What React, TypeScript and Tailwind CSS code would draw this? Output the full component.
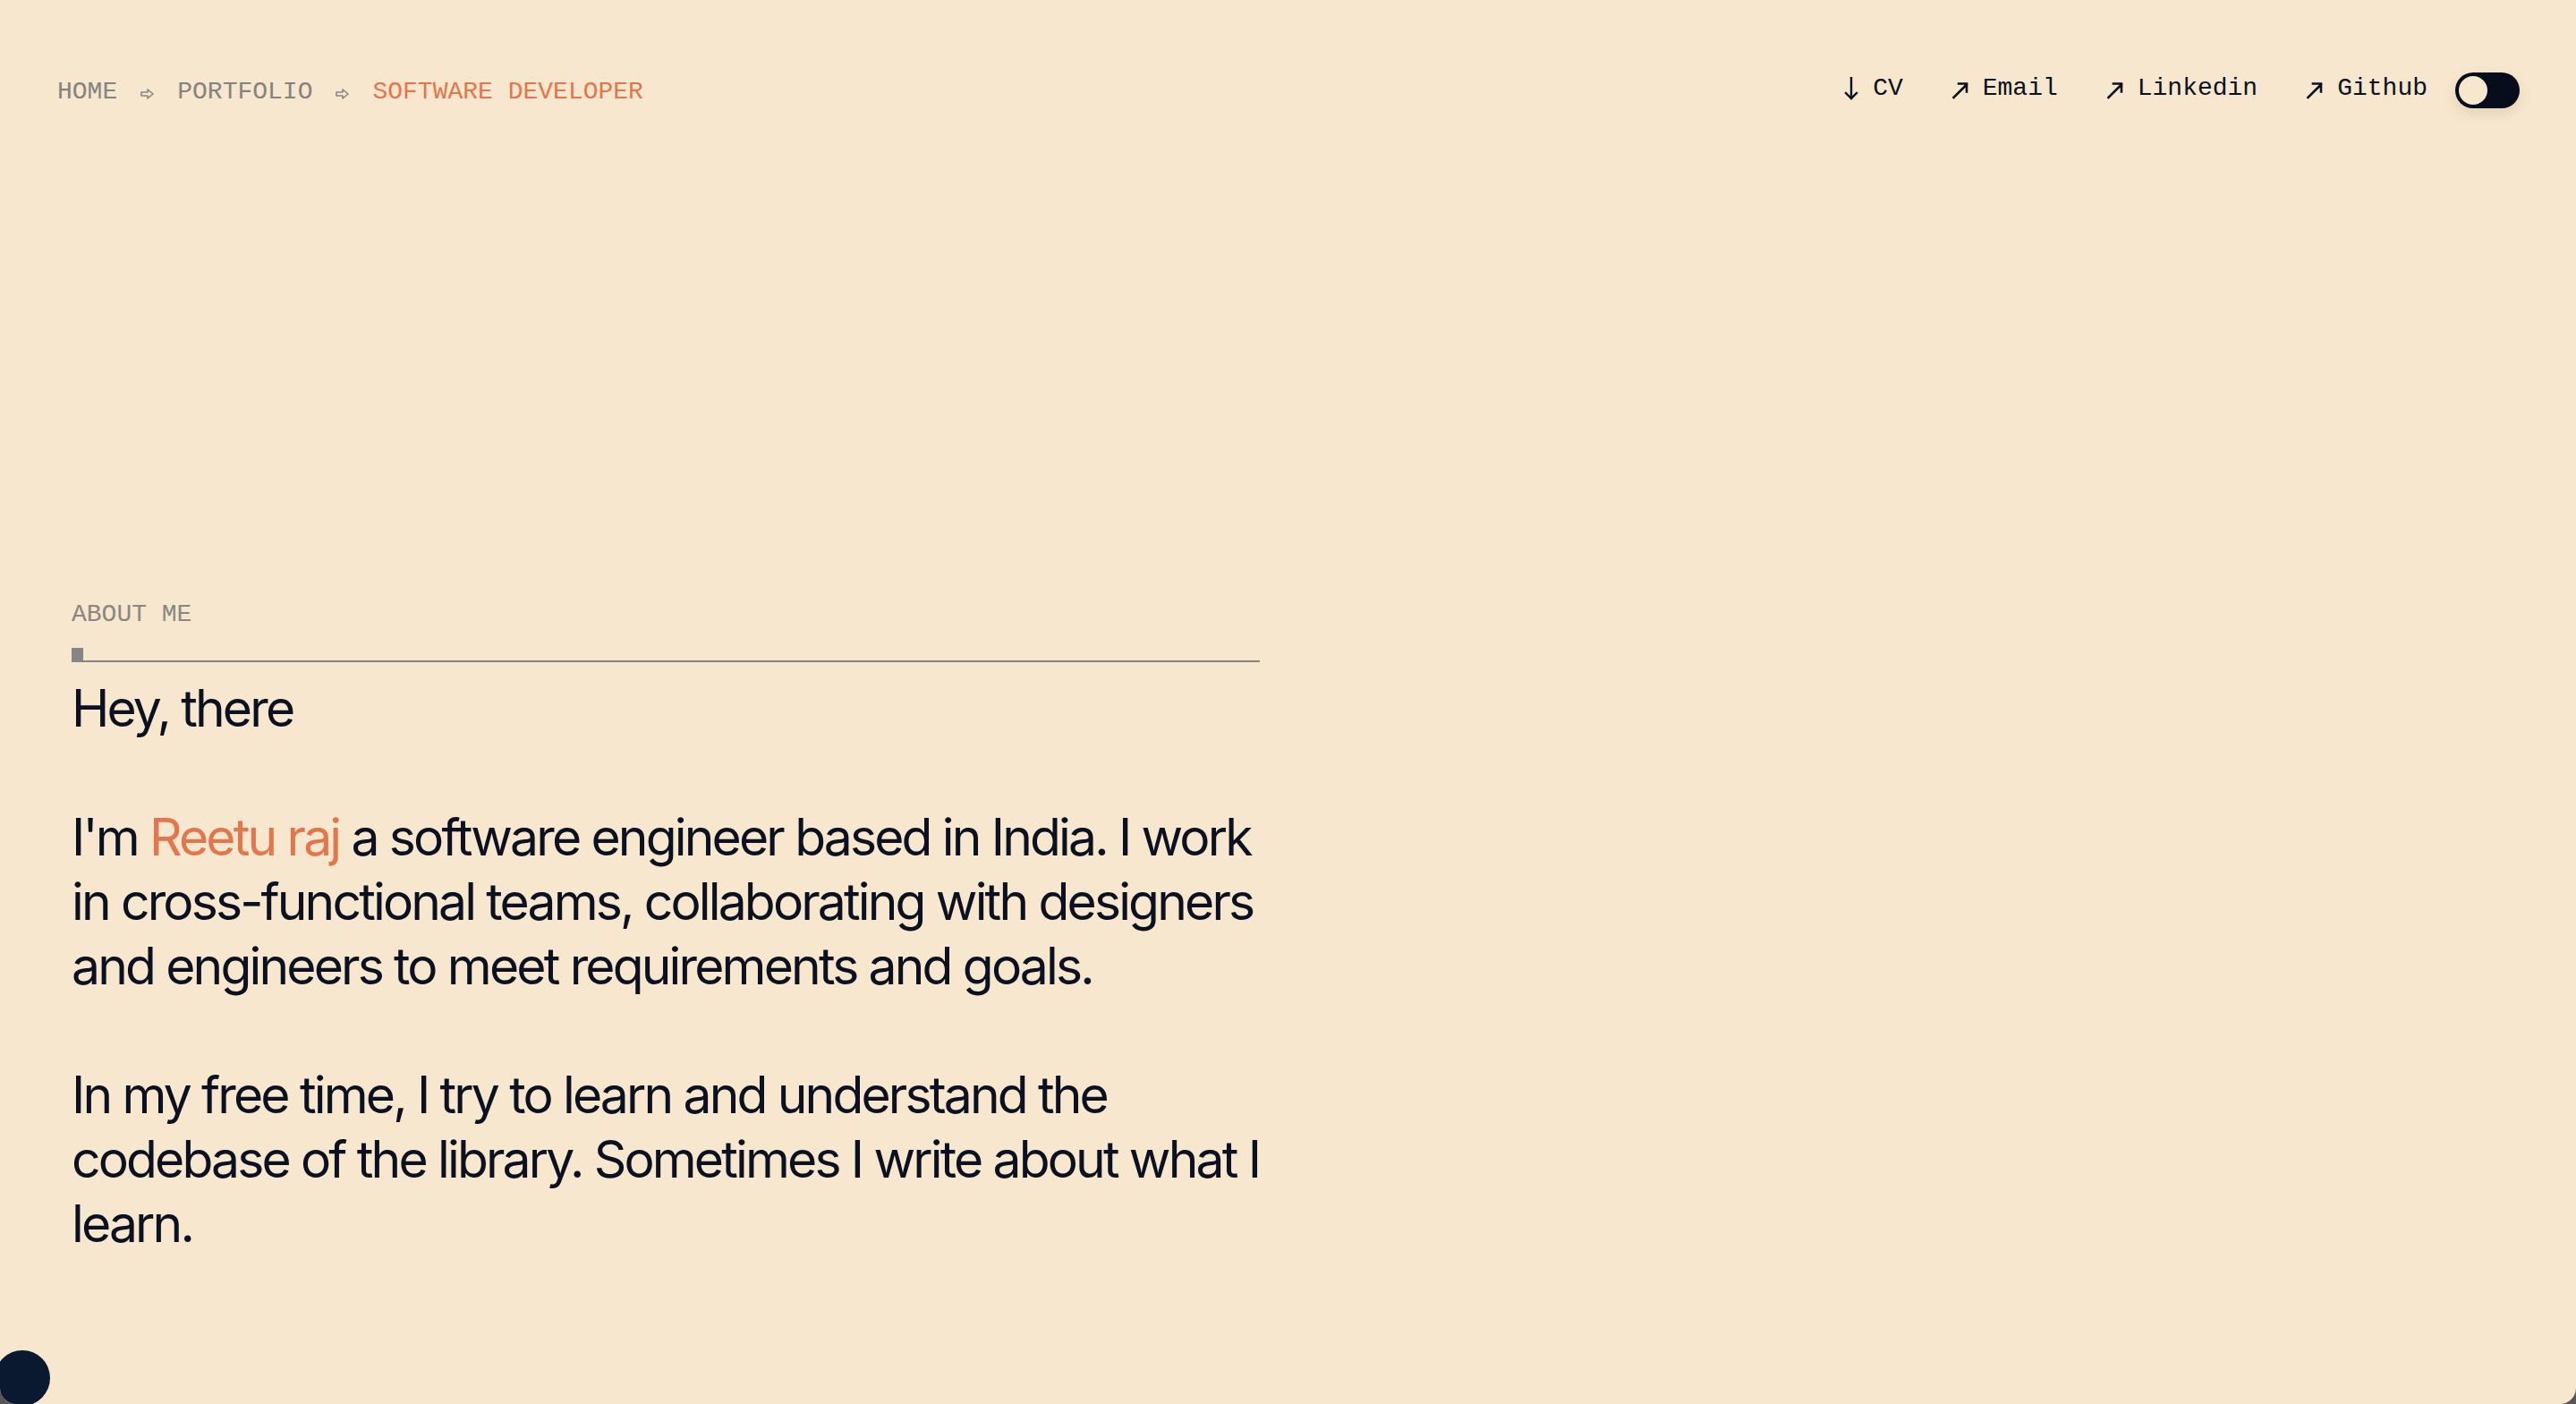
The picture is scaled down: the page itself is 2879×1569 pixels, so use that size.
const mono = { fontFamily: '"Liberation Mono", "DejaVu Sans Mono", monospace' }

function Chevron() {
  return (
    <svg width="15" height="12" viewBox="0 0 15 12" className="shrink-0 translate-y-[2px]">
      <path d="M1 4h7V1l6 5-6 5V8H1z" fill="none" stroke="#8a8782" strokeWidth="1.6" strokeLinejoin="round" />
    </svg>
  )
}

function ArrowDown() {
  return (
    <svg width="18" height="26" viewBox="0 0 18 26" className="shrink-0">
      <path d="M9 1v23M3 18l6 6 6-6" fill="none" stroke="#0b1120" strokeWidth="2.4" strokeLinecap="square" />
    </svg>
  )
}

function ArrowOut() {
  return (
    <svg width="20" height="23" viewBox="0 0 20 23" className="shrink-0">
      <path d="M2.5 21L17 6.5M8 5.5h9v9" fill="none" stroke="#0b1120" strokeWidth="2.6" strokeLinecap="square" />
    </svg>
  )
}

const links = [
  { label: 'CV', down: true },
  { label: 'Email' },
  { label: 'Linkedin' },
  { label: 'Github' },
]

export default function App() {
  return (
    <div className="h-[1569px] w-full overflow-hidden bg-[#565656]">
      <div className="relative h-full overflow-hidden rounded-b-[18px] bg-[#f6e7ce] text-[#0b1120]">
        <header className="flex items-center justify-between pl-[64px] pr-[63px] pt-[81px]">
          <nav className="flex items-center gap-[26px] text-[28px] leading-[40px] translate-y-[2px]" style={mono}>
            <span className="text-[#85837e]">HOME</span>
            <Chevron />
            <span className="text-[#85837e]">PORTFOLIO</span>
            <Chevron />
            <span className="text-[#e2764d]">SOFTWARE DEVELOPER</span>
          </nav>
          <div className="flex items-center">
            <div className="flex items-center gap-[54px] text-[28px] leading-[40px]" style={mono}>
              {links.map((l) => (
                <a key={l.label} href="#" className="flex items-center gap-[15px] -translate-y-[2px]">
                  {l.down ? <ArrowDown /> : <ArrowOut />}
                  <span>{l.label}</span>
                </a>
              ))}
            </div>
            <button className="ml-[31px] flex h-[40px] w-[72px] items-center rounded-full bg-[#070d1c] px-[4px] shadow-[0_6px_14px_rgba(150,120,80,0.18)]">
              <span className="h-[32px] w-[32px] rounded-full bg-[#f6e7ce]" />
            </button>
          </div>
        </header>

        <main className="mt-[545px] px-[80px]">
          <section>
            <div className="w-[1328px]">
              <h2 className="text-[28px] leading-[42px] text-[#8a8782]" style={mono}>ABOUT ME</h2>
              <div className="mt-[16px] border-b-2 border-[#858585]">
                <div className="h-[14px] w-[13px] bg-[#858585]" />
              </div>
            </div>
            <div
              className="mt-[16px] w-[1342px] text-[57px] leading-[72px] tracking-[-0.05em]"
              style={{ fontFamily: 'Inter, "Noto Sans", sans-serif' }}
            >
              <p>Hey, there</p>
              <p className="mt-[72px]">
                I'm <span className="text-[#e2764d]">Reetu raj</span> a software engineer based in India. I work in
                cross-functional teams, collaborating with designers and engineers to meet requirements and goals.
              </p>
              <p className="mt-[72px]">
                In my free time, I try to learn and understand the codebase of the library. Sometimes I write about
                what I learn.
              </p>
            </div>
          </section>
        </main>

        <span className="absolute bottom-[-2px] left-[-6px] h-[62px] w-[62px] rounded-full bg-[#0a1930]" />
      </div>
    </div>
  )
}
